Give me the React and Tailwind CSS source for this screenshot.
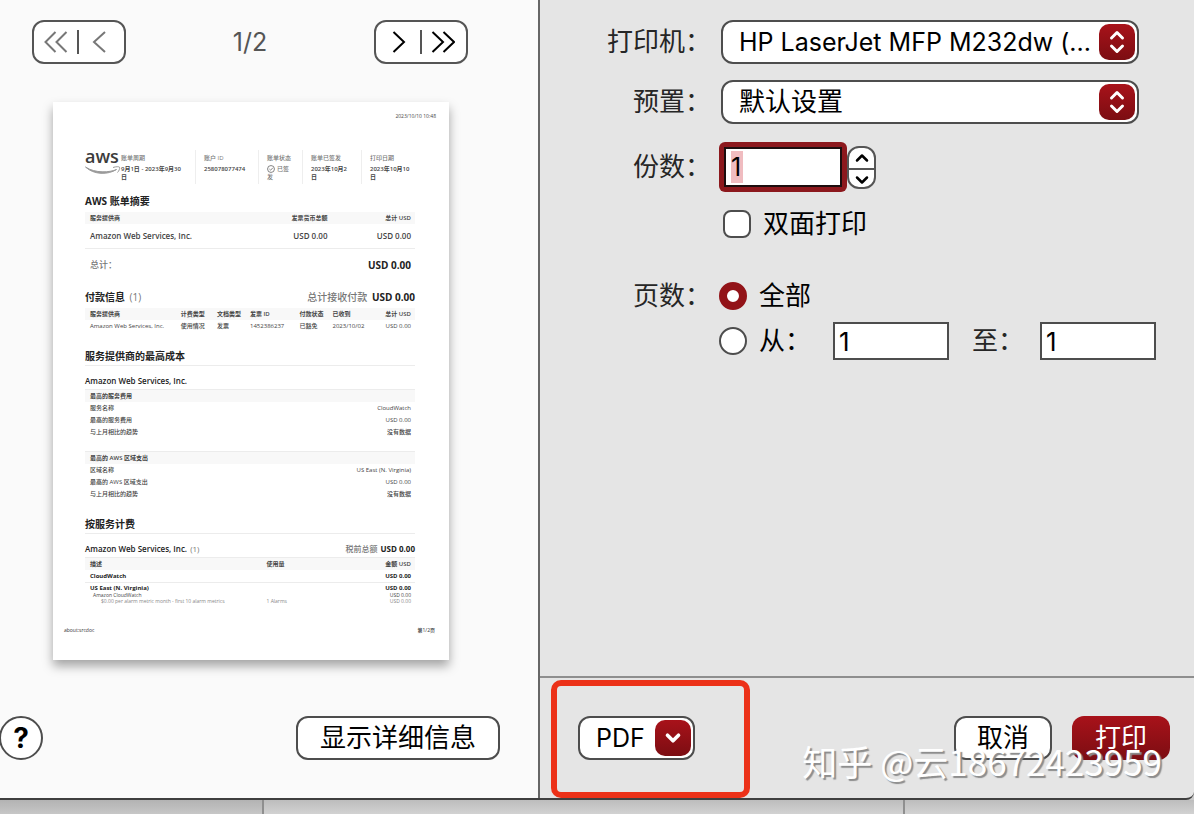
import React, { useState } from "react";
import { ChevronDown, ChevronUp } from "lucide-react";

const PRINTERS = ["HP LaserJet MFP M232dw (..."];
const PRESETS = ["默认设置"];

const billFacts = [
  { label: "账户 ID", value: "258078077474" },
  { label: "账单状态", value: "已签", rest: "发", check: true },
  { label: "账单已签发", value: "2023年10月2", rest: "日" },
  { label: "打印日期", value: "2023年10月10", rest: "日" },
];

const costTables = [
  {
    title: "最高的服务费用",
    rows: [
      ["服务名称", "CloudWatch"],
      ["最高的服务费用", "USD 0.00"],
      ["与上月相比的趋势", "没有数据"],
    ],
  },
  {
    title: "最高的 AWS 区域支出",
    rows: [
      ["区域名称", "US East (N. Virginia)"],
      ["最高的 AWS 区域支出", "USD 0.00"],
      ["与上月相比的趋势", "没有数据"],
    ],
  },
];

function AwsLogo() {
  return (
    <div className="-mt-1 text-[#3c3c3c]">
      <span className="block text-[18px] leading-5 font-semibold">aws</span>
      <svg viewBox="0 0 36 9" className="h-[9px] w-9" fill="none">
        <path d="M0.5 1C9 9 23 9 31.500 3.500C25 6.500 10 7.500 0.500 1Z" fill="#9a9a9a" stroke="#9a9a9a" />
        <path d="M28 1.500C31 0.500 34 0.500 34.500 1.200C35 2.500 34 5 32.500 6.500" stroke="#9a9a9a" />
      </svg>
    </div>
  );
}

function SectionTitle({ children }) {
  return (
    <h2 className="mt-[14px] h-5 border-b border-[#ececec] text-[10px] leading-5 font-bold text-[#222]">
      {children}
    </h2>
  );
}

// The bill that is about to be printed
function PagePreview() {
  return (
    <article className="mt-[38px] ml-[53px] mr-[89px] bg-white pb-[23px] font-['Open_Sans','Noto_Sans_CJK_SC',sans-serif] text-[6px] font-medium text-[#444] shadow-[0_6px_10px_rgba(0,0,0,0.35)]">
      <p className="h-7 pr-[13px] text-right text-[5px] leading-7">2023/10/10 10:48</p>

      <div className="mt-5 ml-8 mr-[34px]">
        <header className="mb-[6px] grid h-[34px] grid-cols-[36px_74fr_63fr_44fr_59fr_54fr] leading-2 whitespace-nowrap">
          <AwsLogo />
          <div className="pt-1">
            <p className="text-[#777]">账单周期</p>
            <p className="mt-[3px] font-semibold">9月1日 - 2023年9月30<br />日</p>
          </div>
          {billFacts.map((fact) => (
            <div key={fact.label} className="border-l border-[#eee] pt-1 pl-2">
              <p className="text-[#777]">{fact.label}</p>
              <p className={fact.check ? "mt-[3px] text-[#777]" : "mt-[3px] font-semibold"}>
                {fact.check && (
                  <svg viewBox="0 0 10 10" className="mr-[2px] inline h-2 w-2" fill="none" stroke="#666">
                    <circle cx="5" cy="5" r="4.300" />
                    <path d="M3 5l1.500 1.500L7.300 3.500" />
                  </svg>
                )}
                {fact.value}
                {fact.rest && <br />}
                {fact.rest}
              </p>
            </div>
          ))}
        </header>

        <h2 className="text-[10px] leading-[22px] font-bold text-[#222]">AWS 账单摘要</h2>
        <table className="w-full table-fixed text-[8px]">
          <thead className="bg-[#f8f8f8] text-[6px]">
            <tr className="h-3">
              <th className="w-1/2 pl-[5px] text-left font-semibold leading-3">服务提供商</th>
              <th className="pr-[5px] text-right font-semibold leading-3">发票货币总额</th>
              <th className="pr-1 text-right font-semibold leading-3">总计 USD</th>
            </tr>
          </thead>
          <tbody>
            <tr className="border-b border-[#ececec] font-semibold">
              <td className="pl-[5px] leading-6">Amazon Web Services, Inc.</td>
              <td className="pr-[5px] text-right leading-6">USD 0.00</td>
              <td className="pr-1 text-right leading-6">USD 0.00</td>
            </tr>
          </tbody>
        </table>
        <p className="flex justify-between pr-1 pl-[5px] leading-8">
          <span className="text-[9px] text-[#777]">总计：</span>
          <b className="text-[10px] text-[#222]">USD 0.00</b>
        </p>

        <div className="mt-[5px] flex justify-between text-[10px] leading-[22px]">
          <h2 className="font-bold text-[#222]">
            付款信息 <span className="ml-[2px] font-normal text-[#777]">(1)</span>
          </h2>
          <p className="text-[#777]">
            总计接收付款 <b className="ml-[2px] text-[#222]">USD 0.00</b>
          </p>
        </div>
        <table className="w-full table-fixed leading-3 whitespace-nowrap">
          <colgroup>
            <col className="w-[29%]" />
            <col className="w-[11%]" />
            <col className="w-[10%]" />
            <col className="w-[15%]" />
            <col className="w-[10%]" />
            <col className="w-[13%]" />
            <col />
          </colgroup>
          <thead className="bg-[#f8f8f8]">
            <tr className="text-left">
              <th className="pl-[5px] font-semibold">服务提供商</th>
              <th className="font-semibold">计费类型</th>
              <th className="font-semibold">文档类型</th>
              <th className="font-semibold">发票 ID</th>
              <th className="font-semibold">付款状态</th>
              <th className="font-semibold">已收到</th>
              <th className="pr-1 text-right font-semibold">总计 USD</th>
            </tr>
          </thead>
          <tbody>
            <tr>
              <td className="pl-[5px]">Amazon Web Services, Inc.</td>
              <td>使用情况</td>
              <td>发票</td>
              <td>1452386237</td>
              <td>已豁免</td>
              <td>2023/10/02</td>
              <td className="pr-1 text-right">USD 0.00</td>
            </tr>
          </tbody>
        </table>

        <SectionTitle>服务提供商的最高成本</SectionTitle>
        <h3 className="mt-[7px] text-[8px] leading-4 font-semibold text-[#222]">Amazon Web Services, Inc.</h3>
        {costTables.map((table) => (
          <table key={table.title} className="mb-[13px] w-full leading-3">
            <thead className="bg-[#f8f8f8]">
              <tr>
                <th colSpan={2} className="border-t border-[#ececec] pl-[5px] text-left font-semibold">{table.title}</th>
              </tr>
            </thead>
            <tbody>
              {table.rows.map(([name, value]) => (
                <tr key={name}>
                  <td className="pl-[5px]">{name}</td>
                  <td className="pr-1 text-right">{value}</td>
                </tr>
              ))}
            </tbody>
          </table>
        ))}

        <SectionTitle>按服务计费</SectionTitle>
        <div className="mt-[7px] flex justify-between text-[8px] leading-4">
          <h3 className="font-semibold text-[#222]">
            Amazon Web Services, Inc. <span className="ml-px font-normal text-[#777]">(1)</span>
          </h3>
          <p className="text-[#777]">
            税前总额 <b className="ml-px text-[#222]">USD 0.00</b>
          </p>
        </div>
        <table className="w-full table-fixed leading-3">
          <thead className="bg-[#f8f8f8]">
            <tr className="border-t border-[#ececec] text-left">
              <th className="w-[55%] pl-[5px] font-semibold">描述</th>
              <th className="font-semibold">使用量</th>
              <th className="pr-1 text-right font-semibold">金额 USD</th>
            </tr>
          </thead>
          <tbody>
            <tr className="border-b border-[#ececec] font-bold text-[#222]">
              <td className="pl-[5px]">CloudWatch</td>
              <td></td>
              <td className="pr-1 text-right">USD 0.00</td>
            </tr>
            <tr className="font-bold text-[#222]">
              <td className="pt-[2px] pl-[5px] leading-[7px]">US East (N. Virginia)</td>
              <td></td>
              <td className="pt-[2px] pr-1 text-right leading-[7px]">USD 0.00</td>
            </tr>
            <tr className="text-[5px] leading-[6px]">
              <td className="pl-2">Amazon CloudWatch</td>
              <td></td>
              <td className="pr-1 text-right">USD 0.00</td>
            </tr>
            <tr className="text-[5px] leading-[6px] text-[#888]">
              <td className="pl-4">$0.00 per alarm metric month - first 10 alarm metrics</td>
              <td>1 Alarms</td>
              <td className="pr-1 text-right">USD 0.00</td>
            </tr>
          </tbody>
        </table>
      </div>

      <footer className="mt-[19px] flex justify-between pr-[14px] pl-[11px] text-[5px] leading-[14px] text-[#333]">
        <span>about:srcdoc</span>
        <span>第1/2页</span>
      </footer>
    </article>
  );
}

function PageNav() {
  return (
    <nav className="flex items-center justify-between pr-[70px] pl-8">
      <div className="flex h-11 w-[94px] items-center rounded-xl border-2 border-[#555] bg-white text-[#777]">
        <button aria-label="第一页" className="pl-[10px]">
          <svg viewBox="0 0 24 22" className="h-[22px] w-6" fill="none" stroke="currentColor" strokeWidth="2">
            <path d="M11.500 1L1.500 11L11.500 21M22.500 1L12.500 11L22.500 21" />
          </svg>
        </button>
        <span className="ml-[9px] h-6 w-[2px] bg-[#555]" />
        <button aria-label="上一页" className="ml-3">
          <svg viewBox="0 0 16 22" className="h-[22px] w-4" fill="none" stroke="currentColor" strokeWidth="2">
            <path d="M14 1L3 11L14 21" />
          </svg>
        </button>
      </div>
      <span className="text-[25px] text-[#555]">1/2</span>
      <div className="flex h-11 w-[94px] items-center rounded-xl border-2 border-[#555] bg-white text-black">
        <button aria-label="下一页" className="pl-[15px]">
          <svg viewBox="0 0 16 22" className="h-[22px] w-4" fill="none" stroke="currentColor" strokeWidth="2">
            <path d="M2.500 1L13 11L2.500 21" />
          </svg>
        </button>
        <span className="ml-[13px] h-6 w-[2px] bg-[#555]" />
        <button aria-label="最后一页" className="ml-[9px]">
          <svg viewBox="0 0 24 22" className="h-[22px] w-6" fill="none" stroke="currentColor" strokeWidth="2">
            <path d="M1.500 1L12 11L1.500 21M12.500 1L23 11L12.500 21" />
          </svg>
        </button>
      </div>
    </nav>
  );
}

function Dropdown({ id, options }) {
  return (
    <div className="relative mr-[55px] flex-1">
      <select
        id={id}
        className="h-11 w-full appearance-none rounded-xl border-2 border-[#4d4d4d] bg-white pr-10 pl-4 text-black"
      >
        {options.map((option) => (
          <option key={option}>{option}</option>
        ))}
      </select>
      <span className="pointer-events-none absolute top-1 right-1 flex h-9 w-9 items-center justify-center rounded-[10px] bg-linear-to-b from-[#a8121a] to-[#7c0d12] text-white">
        <svg viewBox="0 0 16 24" className="h-6 w-4" fill="none" stroke="currentColor" strokeWidth="3" strokeLinecap="round" strokeLinejoin="round">
          <path d="M2.500 8L8 2.500L13.500 8M2.500 16L8 21.500L13.500 16" />
        </svg>
      </span>
    </div>
  );
}

function FieldLabel({ htmlFor, children }) {
  return (
    <label htmlFor={htmlFor} className="w-[171px] shrink-0 text-right text-[26px] text-[#262626]">
      {children}
    </label>
  );
}

function Radio({ id, checked, onChange }) {
  return (
    <input
      id={id}
      type="radio"
      name="range"
      checked={checked}
      onChange={onChange}
      className="h-7 w-7 shrink-0 appearance-none rounded-full border-2 border-[#4d4d4d] bg-white checked:border-8 checked:border-[#921318]"
    />
  );
}

export default function App() {
  const [copies, setCopies] = useState(1);
  const [range, setRange] = useState("all");
  const [from, setFrom] = useState("1");
  const [to, setTo] = useState("1");

  return (
    <div className="flex min-h-screen flex-col bg-[#c9c9c9] font-['Inter','Noto_Sans_CJK_SC',sans-serif] text-[26px] leading-9">
      <main className="grid flex-1 grid-cols-[540fr_654fr] overflow-hidden rounded-br-lg border-b-2 border-[#3f3f3f] bg-[#e5e5e5]">
        {/* Preview side */}
        <section className="flex min-w-0 flex-col justify-between border-r-2 border-[#666] bg-[#fafafa] pt-5 pb-[38px]">
          <div>
            <PageNav />
            <PagePreview />
          </div>
          <div className="flex items-center justify-between pr-[38px]">
            <button
              aria-label="帮助"
              className="-ml-px h-11 w-11 rounded-full border-2 border-[#4d4d4d] bg-white text-[28px] font-bold text-black"
            >
              ?
            </button>
            <button className="h-11 rounded-xl border-2 border-[#4d4d4d] bg-white px-[22px] text-black">显示详细信息</button>
          </div>
        </section>

        {/* Settings side */}
        <section className="flex min-w-0 flex-col">
          <form className="flex-1 pt-5" onSubmit={(e) => e.preventDefault()}>
            <div className="flex items-center gap-[10px] text-[25px]">
              <FieldLabel htmlFor="printer">打印机：</FieldLabel>
              <Dropdown id="printer" options={PRINTERS} />
            </div>
            <div className="mt-4 flex items-center gap-[10px]">
              <FieldLabel htmlFor="preset">预置：</FieldLabel>
              <Dropdown id="preset" options={PRESETS} />
            </div>

            <div className="mt-[18px] flex items-center gap-2">
              <FieldLabel htmlFor="copies">份数：</FieldLabel>
              <div className="flex items-center">
                <div className="rounded-md bg-[#8c181d] p-[5px]">
                  <div className="flex h-10 w-[118px] items-center border-2 border-[#1c0d0e] bg-white pl-[5px]">
                    <input
                      id="copies"
                      value={copies}
                      onChange={(e) => setCopies(Number(e.target.value) || 1)}
                      className="h-8 w-3 bg-[#f0bcc0] text-[25px] text-black outline-none"
                    />
                  </div>
                </div>
                <div className="flex h-[43px] w-[29px] flex-col divide-y-2 divide-[#555] overflow-hidden rounded-xl border-2 border-[#555] bg-white text-black">
                  <button type="button" aria-label="增加" onClick={() => setCopies(copies + 1)} className="flex flex-1 items-center justify-center">
                    <ChevronUp size={20} strokeWidth={3} />
                  </button>
                  <button type="button" aria-label="减少" onClick={() => setCopies(Math.max(1, copies - 1))} className="flex flex-1 items-center justify-center">
                    <ChevronDown size={20} strokeWidth={3} />
                  </button>
                </div>
              </div>
            </div>

            <div className="mt-[14px] flex items-center gap-3 pl-[183px] text-black">
              <input
                id="duplex"
                type="checkbox"
                className="h-7 w-7 appearance-none rounded-lg border-2 border-[#4d4d4d] bg-white checked:bg-[#921318]"
              />
              <label htmlFor="duplex">双面打印</label>
            </div>

            <div className="mt-9 flex items-center gap-2">
              <span className="w-[171px] shrink-0 text-right text-[#262626]">页数：</span>
              <div className="flex items-center gap-3 text-black">
                <Radio id="all" checked={range === "all"} onChange={() => setRange("all")} />
                <label htmlFor="all">全部</label>
              </div>
            </div>
            <div className="mt-2 flex items-center pl-[179px] text-black">
              <Radio id="some" checked={range === "some"} onChange={() => setRange("some")} />
              <label htmlFor="some" className="ml-3 w-[74px] shrink-0">从：</label>
              <input
                aria-label="从"
                value={from}
                onChange={(e) => setFrom(e.target.value)}
                className="h-[38px] w-[116px] min-w-0 border-2 border-[#4d4d4d] bg-white pl-1"
              />
              <label htmlFor="to" className="ml-[23px] w-[68px] shrink-0 text-[#262626]">至：</label>
              <input
                id="to"
                value={to}
                onChange={(e) => setTo(e.target.value)}
                className="h-[38px] w-[116px] min-w-0 border-2 border-[#4d4d4d] bg-white pl-1"
              />
            </div>
          </form>

          <footer className="relative flex h-[122px] items-center justify-between border-t-2 border-[#8e8e8e] pr-6 pl-[38px]">
            <button className="flex h-11 items-center gap-[10px] rounded-xl border-2 border-[#4d4d4d] bg-white pr-[2px] pl-4 text-[25px] text-black">
              PDF
              <span className="flex h-9 w-9 items-center justify-center rounded-[10px] bg-linear-to-b from-[#a8121a] to-[#7c0d12] text-white">
                <ChevronDown size={22} strokeWidth={4} />
              </span>
            </button>
            <div className="flex gap-5">
              <button className="h-11 rounded-xl border-2 border-[#4d4d4d] bg-white px-[21px] text-black">取消</button>
              <button className="h-11 rounded-xl bg-linear-to-b from-[#a8121a] to-[#7c0d12] px-[23px] text-white">打印</button>
            </div>

            {/* highlight and watermark lie over the bar */}
            <div className="pointer-events-none absolute top-[2px] bottom-0 left-[11px] w-[199px] rounded-[10px] border-6 border-[#ec3118]" />
            <p className="pointer-events-none absolute right-8 bottom-[10px] font-['Noto_Sans_CJK_SC',sans-serif] text-[35px] leading-[54px] whitespace-nowrap text-white [text-shadow:2px_2px_1px_#8c8c8c]">
              知乎 @云18672423959
            </p>
          </footer>
        </section>
      </main>

      {/* Window behind the dialog */}
      <div className="grid h-[14px] grid-cols-[264fr_641fr_289fr] divide-x-2 divide-[#8f8f8f] bg-linear-to-b from-[#bdbdbd] to-[#d2d2d2]">
        <div className="bg-black/5" />
        <div />
        <div />
      </div>
    </div>
  );
}
